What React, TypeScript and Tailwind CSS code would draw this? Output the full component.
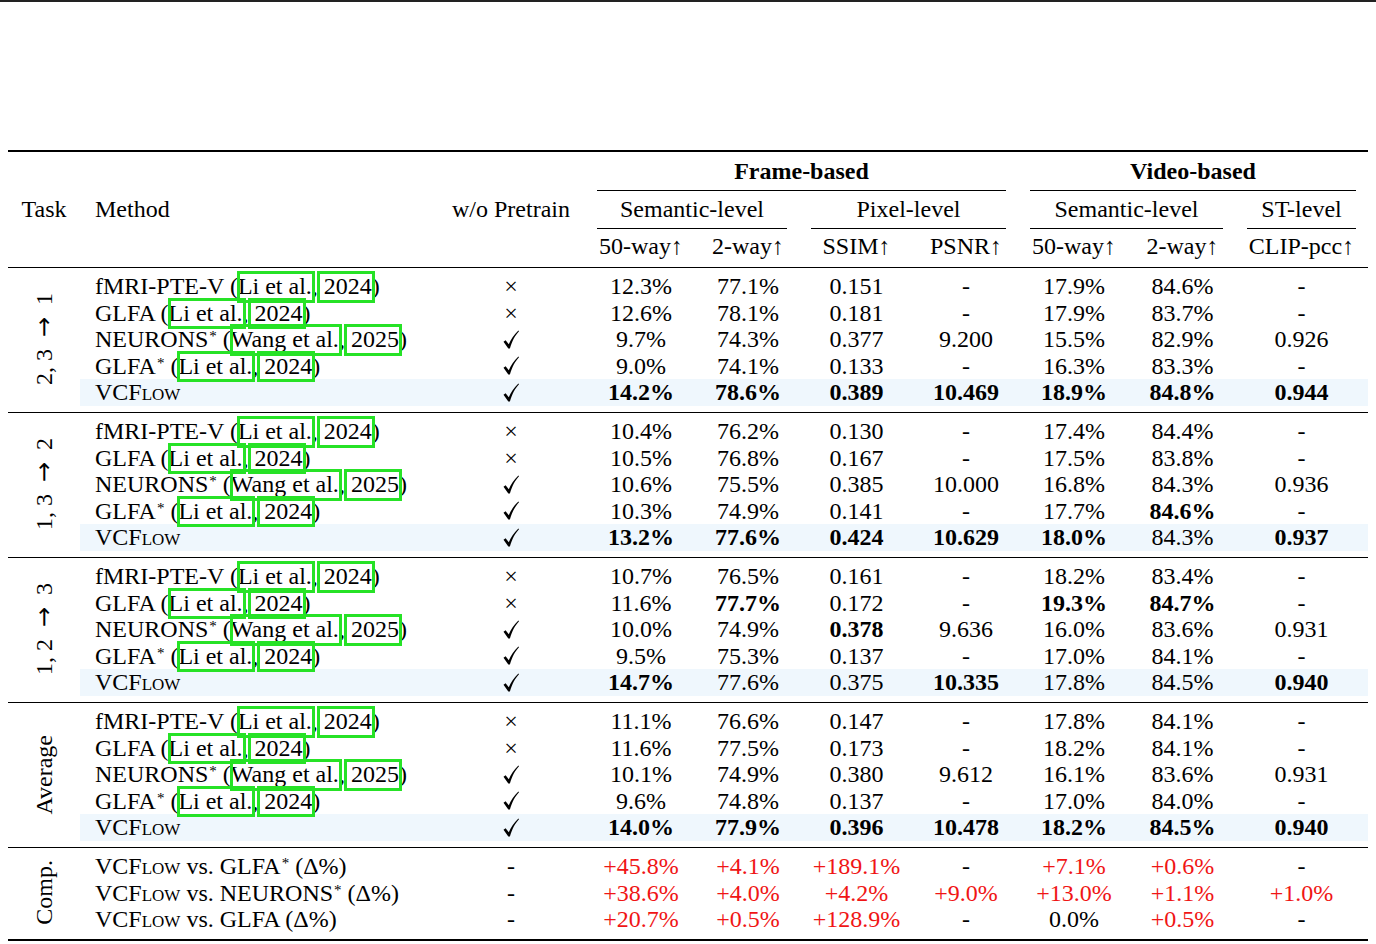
import React from 'react';

type Cell = string | { v: string; b: true };

interface Row {
  method: React.ReactNode;
  pre: 'x' | 'ok' | '-';
  vals: Cell[];
  hl?: boolean;
}

const COLS = 'grid-cols-[72px_357px_148px_112px_102px_115px_104px_112px_105px_133px]';

const Box = ({ children }: { children: React.ReactNode }) => (
  <span className="relative inline-block whitespace-pre">
    {children}
    <span className="absolute -left-[1px] -right-[3px] -top-[2px] -bottom-[3px] border-[3px] border-[#26e226]" />
  </span>
);

const Cite = ({ who, year }: { who: string; year: string }) => (
  <>
    (<Box>{who}</Box>,<Box>{' ' + year}</Box>)
  </>
);

const Star = () => <span className="relative -top-[6px] text-[15px] leading-none ml-[1px]">*</span>;

const VC = () => <span className="[font-variant:small-caps]">VCFlow</span>;

const Check = () => (
  <svg viewBox="0 0 16 19" className="inline-block w-[16px] h-[19px] -mt-[4px] align-middle">
    <path
      d="M0.5 11.8 L2.6 10.2 L5.8 14.3 C8 9 11 4.6 15.4 0.5 L16 1.2 C12 5.6 9.2 10.6 6.9 18.6 L5.3 18.6 Z"
      fill="#000"
    />
  </svg>
);

const Arrow = () => (
  <>
    {'\u2002'}
    <span className="font-['DejaVu_Sans',sans-serif] text-[24px]">→</span>
    {'\u2002'}
  </>
);

const fmri = <>fMRI-PTE-V <Cite who="Li et al." year="2024" /></>;
const glfa = <>GLFA <Cite who="Li et al." year="2024" /></>;
const neurons = <>NEURONS<Star /> <Cite who="Wang et al." year="2025" /></>;
const glfaS = <>GLFA<Star /> <Cite who="Li et al." year="2024" /></>;

const B = (v: string): Cell => ({ v, b: true });

const makeGroup = (r: Cell[][], pres: Row['pre'][] = ['x', 'x', 'ok', 'ok', 'ok']): Row[] =>
  [fmri, glfa, neurons, glfaS, <VC />].map((m, i) => ({ method: m, pre: pres[i], vals: r[i], hl: i === 4 }));

const groups: { label: React.ReactNode; rows: Row[] }[] = [
  {
    label: <>2, 3<Arrow />1</>,
    rows: makeGroup([
      ['12.3%', '77.1%', '0.151', '-', '17.9%', '84.6%', '-'],
      ['12.6%', '78.1%', '0.181', '-', '17.9%', '83.7%', '-'],
      ['9.7%', '74.3%', '0.377', '9.200', '15.5%', '82.9%', '0.926'],
      ['9.0%', '74.1%', '0.133', '-', '16.3%', '83.3%', '-'],
      [B('14.2%'), B('78.6%'), B('0.389'), B('10.469'), B('18.9%'), B('84.8%'), B('0.944')],
    ]),
  },
  {
    label: <>1, 3<Arrow />2</>,
    rows: makeGroup([
      ['10.4%', '76.2%', '0.130', '-', '17.4%', '84.4%', '-'],
      ['10.5%', '76.8%', '0.167', '-', '17.5%', '83.8%', '-'],
      ['10.6%', '75.5%', '0.385', '10.000', '16.8%', '84.3%', '0.936'],
      ['10.3%', '74.9%', '0.141', '-', '17.7%', B('84.6%'), '-'],
      [B('13.2%'), B('77.6%'), B('0.424'), B('10.629'), B('18.0%'), '84.3%', B('0.937')],
    ]),
  },
  {
    label: <>1, 2<Arrow />3</>,
    rows: makeGroup([
      ['10.7%', '76.5%', '0.161', '-', '18.2%', '83.4%', '-'],
      ['11.6%', B('77.7%'), '0.172', '-', B('19.3%'), B('84.7%'), '-'],
      ['10.0%', '74.9%', B('0.378'), '9.636', '16.0%', '83.6%', '0.931'],
      ['9.5%', '75.3%', '0.137', '-', '17.0%', '84.1%', '-'],
      [B('14.7%'), '77.6%', '0.375', B('10.335'), '17.8%', '84.5%', B('0.940')],
    ]),
  },
  {
    label: 'Average',
    rows: makeGroup([
      ['11.1%', '76.6%', '0.147', '-', '17.8%', '84.1%', '-'],
      ['11.6%', '77.5%', '0.173', '-', '18.2%', '84.1%', '-'],
      ['10.1%', '74.9%', '0.380', '9.612', '16.1%', '83.6%', '0.931'],
      ['9.6%', '74.8%', '0.137', '-', '17.0%', '84.0%', '-'],
      [B('14.0%'), B('77.9%'), B('0.396'), B('10.478'), B('18.2%'), B('84.5%'), B('0.940')],
    ]),
  },
];

const comp: Row[] = [
  {
    method: <><VC /> vs. GLFA<Star /> (Δ%)</>,
    pre: '-',
    vals: ['+45.8%', '+4.1%', '+189.1%', '-', '+7.1%', '+0.6%', '-'],
  },
  {
    method: <><VC /> vs. NEURONS<Star /> (Δ%)</>,
    pre: '-',
    vals: ['+38.6%', '+4.0%', '+4.2%', '+9.0%', '+13.0%', '+1.1%', '+1.0%'],
  },
  {
    method: <><VC /> vs. GLFA (Δ%)</>,
    pre: '-',
    vals: ['+20.7%', '+0.5%', '+128.9%', '-', '0.0%', '+0.5%', '-'],
  },
];

function DataRow({ row }: { row: Row }) {
  return (
    <div className={`col-start-2 col-span-9 grid grid-cols-subgrid ${row.hl ? 'bg-[#eff7fd]' : ''}`}>
      <div className="pl-[15px] whitespace-nowrap">{row.method}</div>
      <div className="text-center">
        {row.pre === 'x' ? '×' : row.pre === 'ok' ? <Check /> : '-'}
      </div>
      {row.vals.map((c, i) => {
        const v = typeof c === 'string' ? c : c.v;
        const bold = typeof c !== 'string';
        return (
          <div
            key={i}
            className={`text-center ${bold ? 'font-bold' : ''} ${v.startsWith('+') ? 'text-[#f01515]' : ''}`}
          >
            {v}
          </div>
        );
      })}
    </div>
  );
}

function Group({ label, rows, last }: { label: React.ReactNode; rows: Row[]; last?: boolean }) {
  return (
    <div
      className={`grid ${COLS} auto-rows-[26.5px] border-t border-black pt-[5px] ${
        last ? 'pb-[6px] border-b-2' : 'pb-[6.5px]'
      }`}
    >
      <div className={`col-start-1 ${rows.length === 5 ? 'row-span-5' : 'row-span-3'} flex items-center justify-center`}>
        <span className="[writing-mode:vertical-rl] rotate-180 whitespace-nowrap">{label}</span>
      </div>
      {rows.map((r, i) => (
        <DataRow key={i} row={r} />
      ))}
    </div>
  );
}

function Head({ children, bold }: { children: React.ReactNode; bold?: boolean }) {
  return (
    <div className="flex flex-col">
      <div className={`flex-1 flex items-center justify-center ${bold ? 'font-bold' : ''}`}>{children}</div>
      <div className="mx-3 h-px bg-black" />
    </div>
  );
}

export default function App() {
  return (
    <div className="w-[1376px] h-[944px] overflow-hidden bg-white text-black font-['Liberation_Serif',serif] text-[24px] leading-[26.5px]">
      <div className="h-[2px] bg-[#222]" />
      <div className="ml-[8px] mt-[148px] w-[1360px]">
        {/* header */}
        <div className={`grid ${COLS} grid-rows-[39px_38px_38px] border-t-2 border-black`}>
          <div className="row-span-3 flex items-center justify-center">Task</div>
          <div className="row-span-3 flex items-center pl-[15px]">Method</div>
          <div className="row-span-3 flex items-center justify-center">w/o Pretrain</div>
          <div className="col-span-4 grid">
            <Head bold>Frame-based</Head>
          </div>
          <div className="col-span-3 grid">
            <Head bold>Video-based</Head>
          </div>
          <div className="col-start-4 col-span-2 grid"><Head>Semantic-level</Head></div>
          <div className="col-span-2 grid"><Head>Pixel-level</Head></div>
          <div className="col-span-2 grid"><Head>Semantic-level</Head></div>
          <div className="grid"><Head>ST-level</Head></div>
          {['50-way↑', '2-way↑', 'SSIM↑', 'PSNR↑', '50-way↑', '2-way↑', 'CLIP-pcc↑'].map((h, i) => (
            <div key={i} className={`${i === 0 ? 'col-start-4' : ''} flex items-center justify-center pb-[3px]`}>
              {h}
            </div>
          ))}
        </div>
        {groups.map((g, i) => (
          <Group key={i} label={g.label} rows={g.rows} />
        ))}
        <Group label="Comp." rows={comp} last />
      </div>
    </div>
  );
}
